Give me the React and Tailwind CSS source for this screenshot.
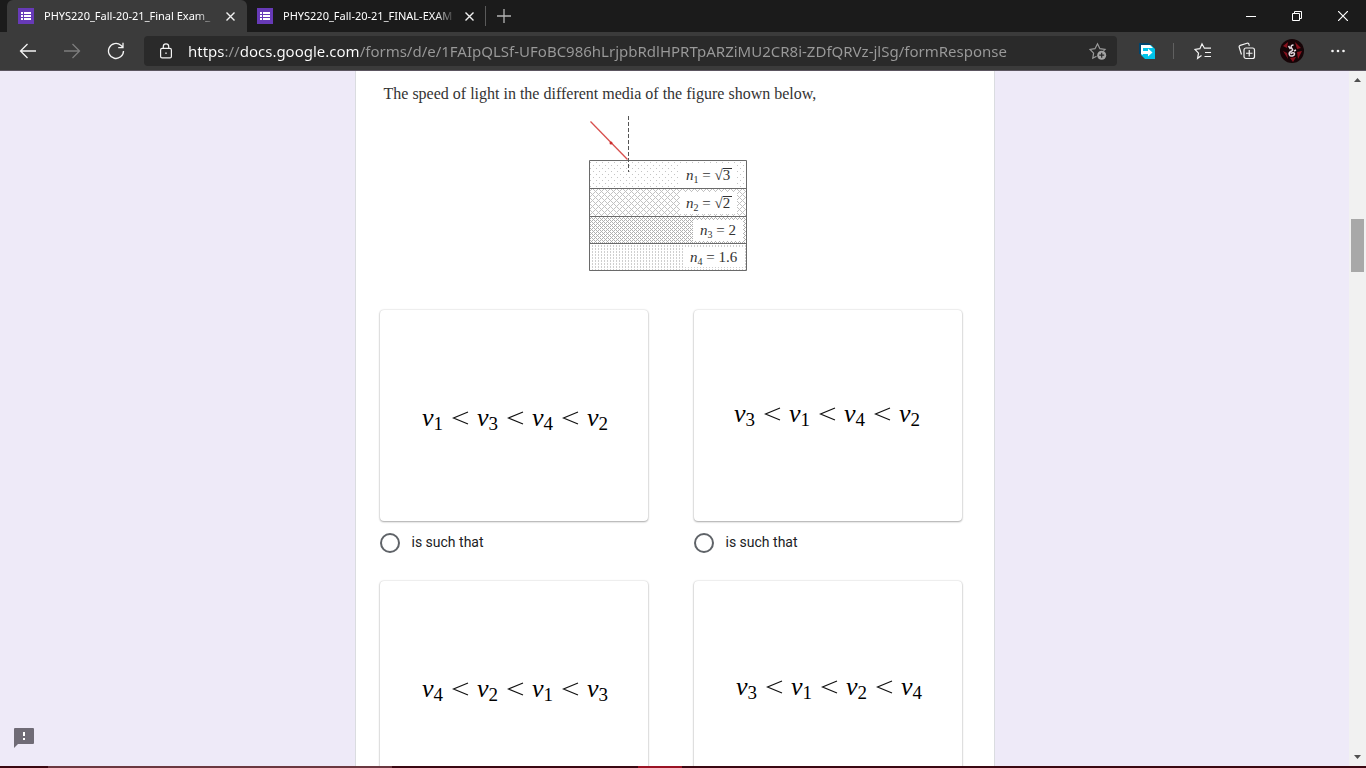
const tabs = [
  { title: "PHYS220_Fall-20-21_Final Exam_", active: true },
  { title: "PHYS220_Fall-20-21_FINAL-EXAM", active: false },
];

const url =
  "https://docs.google.com/forms/d/e/1FAIpQLSf-UFoBC986hLrjpbRdlHPRTpARZiMU2CR8i-ZDfQRVz-jlSg/formResponse";

const choices = [
  { id: "a", order: [1, 3, 4, 2], pad: "pl-1 pt-1" },
  { id: "b", order: [3, 1, 4, 2], pad: "pb-1" },
  { id: "c", order: [4, 2, 1, 3], pad: "pl-1 pt-1" },
  { id: "d", order: [3, 1, 2, 4], pad: "pl-1" },
];

function FormIcon() {
  return (
    <svg className="h-4 w-4 shrink-0" viewBox="0 0 16 16" shapeRendering="crispEdges">
      <rect width="16" height="16" fill="#673ab7" />
      <g fill="#fff">
        <rect x="3" y="4" width="2" height="2" />
        <rect x="6" y="4" width="7" height="2" />
        <rect x="3" y="7" width="2" height="2" />
        <rect x="6" y="7" width="7" height="2" />
        <rect x="3" y="10" width="2" height="2" />
        <rect x="6" y="10" width="7" height="2" />
      </g>
    </svg>
  );
}

function Tab({ title, active }) {
  return (
    <div
      className={
        active
          ? "flex h-8 w-[240px] items-center rounded-t-md bg-[#3b3b3b] px-[11px]"
          : "flex h-8 w-[238px] items-center px-2.5"
      }
    >
      <FormIcon />
      <span className="ml-2.5 min-w-0 flex-1 overflow-hidden whitespace-nowrap font-['Noto_Sans',sans-serif] text-[11px] leading-4 text-white [mask-image:linear-gradient(to_right,#000_88%,transparent)]">
        {title}
      </span>
      <button aria-label="Close tab" className="ml-2 shrink-0">
        <svg className="h-[11px] w-[11px]" viewBox="0 0 11 11" stroke="#f0f0f0" strokeWidth="1.4">
          <path d="M1.5 1.5l8 8M9.5 1.5l-8 8" />
        </svg>
      </button>
    </div>
  );
}

function TitleBar() {
  return (
    <div className="flex h-8 shrink-0 items-center bg-[#1b1b1b] pl-[7px]">
      {tabs.map((tab) => (
        <Tab key={tab.title} {...tab} />
      ))}
      <div className="h-5 w-px bg-[#5a5a5a]" />
      <button aria-label="New tab" className="ml-2.5">
        <svg className="h-4 w-4" viewBox="0 0 16 16" stroke="#b4b4b4" strokeWidth="1.3">
          <path d="M8 1v14M1 8h14" />
        </svg>
      </button>
      <div className="ml-auto flex">
        <button aria-label="Minimize" className="flex h-7 w-[46px] items-center justify-center">
          <svg className="h-2.5 w-2.5" viewBox="0 0 10 10" stroke="#fff">
            <path d="M0 5.5h10" />
          </svg>
        </button>
        <button aria-label="Restore" className="flex h-7 w-[46px] items-center justify-center">
          <svg className="h-2.5 w-2.5" viewBox="0 0 10 10" fill="none" stroke="#fff">
            <path d="M.5 2.5h7v7h-7zM2.5 2.5v-2h7v7h-2" />
          </svg>
        </button>
        <button aria-label="Close" className="flex h-7 w-[46px] items-center justify-center">
          <svg className="h-2.5 w-2.5" viewBox="0 0 10 10" stroke="#fff" strokeWidth="1.2">
            <path d="M0 0l10 10M10 0L0 10" />
          </svg>
        </button>
      </div>
    </div>
  );
}

function Toolbar() {
  return (
    <div className="flex h-[39px] shrink-0 items-center border-b border-[#5b5560] bg-[#3b3b3b] pl-1.5 pr-[5px]">
      <button aria-label="Back" className="flex w-11 justify-center">
        <svg className="h-[18px] w-[18px]" viewBox="0 0 18 18" fill="none" stroke="#f4f4f4" strokeWidth="1.3">
          <path d="M17 9H1.5M8.5 2l-7 7 7 7" />
        </svg>
      </button>
      <button aria-label="Forward" className="flex w-11 justify-center">
        <svg className="h-[18px] w-[18px]" viewBox="0 0 18 18" fill="none" stroke="#7d7d7d" strokeWidth="1.3">
          <path d="M1 9h15.5M9.5 2l7 7-7 7" />
        </svg>
      </button>
      <button aria-label="Refresh" className="flex w-11 justify-center">
        <svg className="h-[18px] w-[18px]" viewBox="0 0 18 18" fill="none" stroke="#f4f4f4" strokeWidth="1.3">
          <path d="M16.5 9A7.5 7.5 0 1 1 13.8 3.2L16 5.2M16 .8v4.8h-4.8" />
        </svg>
      </button>

      <div className="ml-1.5 flex h-[30px] min-w-0 flex-1 items-center rounded bg-[#2a2a2a] pl-4 pr-2.5">
        <svg className="h-4 w-3 shrink-0" viewBox="0 0 12 16" fill="none" stroke="#f4f4f4" strokeWidth="1.2">
          <rect x=".6" y="5.4" width="10.8" height="9.5" rx="1.5" />
          <path d="M3.3 5.4V3.5a2.7 2.7 0 0 1 5.4 0v1.9" />
          <rect x="5.3" y="9.5" width="1.4" height="1.4" fill="#f4f4f4" stroke="none" />
        </svg>
        <input
          aria-label="Address"
          readOnly
          value={url}
          className="ml-4 min-w-0 flex-1 bg-[linear-gradient(to_right,#ffffff_37px,#9a9a9a_37px,#9a9a9a_52px,#ffffff_52px,#ffffff_171px,#9a9a9a_171px)] bg-clip-text font-['Noto_Sans',sans-serif] text-[15px] leading-6 text-transparent outline-none"
        />
        <button aria-label="Add to favorites" className="shrink-0">
          <svg className="h-[18px] w-[18px]" viewBox="0 0 18 18" fill="none" stroke="#9b9b9b" strokeWidth="1.2">
            <path d="M7.5 14.2L3.8 16.2l.8-5.1L1 7.4l5-.7L8.5 1.8l2.4 4.9 5.1.7-1.5 1.4" />
            <circle cx="12.7" cy="13.2" r="4.5" fill="#a4a4a4" stroke="none" />
            <path d="M12.7 10.7v5M10.2 13.2h5" stroke="#2a2a2a" />
          </svg>
        </button>
      </div>

      <button aria-label="Extension" className="ml-[7px] flex w-[46px] justify-center">
        <svg className="h-4 w-4" viewBox="0 0 16 16">
          <path d="M0 0h10l2 2v9H0z" fill="#00456e" />
          <path d="M2 2h10l4 4v10H6l-4-4z" fill="#00c4ea" />
          <path d="M2 2h9l3 3H4v7l-2-1z" fill="#fff" />
          <path d="M4 8h5V5.5L13.5 9.500 9 13.500V11H4z" fill="#fff" />
        </svg>
      </button>
      <div className="ml-[3px] mr-[7px] h-4 w-px bg-[#606060]" />
      <button aria-label="Favorites" className="flex w-11 justify-center">
        <svg className="h-[18px] w-[18px]" viewBox="0 0 18 18" fill="none" stroke="#f4f4f4" strokeWidth="1.2">
          <path d="M7.5 13.5L3.6 16.3l.9-5.2L1 7.400l4.900-.7L8 1.800l2.400 4.400H17M11 10.500h6M10.500 14.500H17" />
        </svg>
      </button>
      <button aria-label="Collections" className="flex w-11 justify-center">
        <svg className="h-[18px] w-[18px]" viewBox="0 0 18 18" fill="none" stroke="#f4f4f4" strokeWidth="1.2">
          <path d="M3.5 12.5L1.200 5.200a1.500 1.500 0 0 1 1-1.900L9 1.200a1.500 1.500 0 0 1 1.900 1l.5 1.500" />
          <rect x="6" y="6" width="10.5" height="10.5" rx="2" />
          <path d="M11.25 8v6.5M8 11.25h6.5" />
        </svg>
      </button>
      <button aria-label="Profile" className="flex w-[46px] justify-center">
        <svg className="h-6 w-6" viewBox="0 0 24 24">
          <circle cx="12" cy="12" r="12" fill="#160407" />
          <path d="M3 7l5-4-1 6zM15 3l6 6-4 1zM3 12l4 2 1 6zM17 13l5-1-4 8zM10 19l6-1-3 5z" fill="#8a101d" />
          <path
            d="M13.5 6c-2 0-3 1.500-2 3s2 2 0 3-3 2-2 4 5 1 5-1-3-1.500-3.500 0M8.500 7l2 3M14 12l2-1"
            fill="none"
            stroke="#e4d8df"
            strokeWidth="1.5"
          />
        </svg>
      </button>
      <button aria-label="Settings and more" className="flex w-[46px] justify-center">
        <svg className="h-3.5 w-3.5" viewBox="0 0 14 14" fill="#f4f4f4">
          <circle cx="1.5" cy="7" r="1.3" />
          <circle cx="7" cy="7" r="1.3" />
          <circle cx="12.5" cy="7" r="1.3" />
        </svg>
      </button>
    </div>
  );
}

function MediaFigure() {
  return (
    <svg
      className="mx-auto h-[170px] w-[180px]"
      viewBox="0 0 180 170"
      fontFamily="'Liberation Serif', serif"
      fontSize="15"
      fill="#333"
    >
      <defs>
        <pattern id="sparse" width="6" height="6" patternUnits="userSpaceOnUse">
          <path d="M1 1h1v1H1zM4 4h1v1H4z" fill="#c4c4c4" />
        </pattern>
        <pattern id="cross" width="6" height="6" patternUnits="userSpaceOnUse">
          <path d="M0 0h1v1H0zM1 1h1v1H1zM2 2h1v1H2zM3 3h1v1H3zM4 4h1v1H4zM5 5h1v1H5zM5 1h1v1H5zM4 2h1v1H4zM2 4h1v1H2zM1 5h1v1H1z" fill="#c2c2c2" />
        </pattern>
        <pattern id="dense" width="4" height="4" patternUnits="userSpaceOnUse">
          <path d="M0 0h1v1H0zM2 0h1v1H2zM1 1h1v1H1zM0 2h1v1H0zM2 2h1v1H2zM3 3h1v1H3z" fill="#b0b0b0" />
        </pattern>
        <pattern id="columns" width="3" height="3" patternUnits="userSpaceOnUse">
          <path d="M0 0h1v2H0z" fill="#cfcfcf" />
        </pattern>
      </defs>
      <rect x="9" y="50" width="158" height="28" fill="url(#sparse)" />
      <rect x="9" y="78" width="158" height="28" fill="url(#cross)" />
      <rect x="9" y="106" width="158" height="28" fill="url(#dense)" />
      <rect x="9" y="134" width="158" height="27" fill="url(#columns)" />
      <g fill="#fff">
        <rect x="100" y="54" width="57" height="23" />
        <rect x="100" y="82" width="57" height="22" />
        <rect x="113" y="110" width="50" height="21" />
        <rect x="104" y="137" width="59" height="20" />
      </g>
      <path
        d="M9.5 50.5h157v110h-157zM9.5 78.5h157M9.5 106.5h157M9.5 133.5h157"
        fill="none"
        stroke="#6a6a6a"
      />
      <path d="M48.5 6v56" stroke="#555" strokeDasharray="4 2" />
      <path d="M10.5 11.5l37 38" stroke="#d8504e" strokeWidth="1.3" />
      <circle cx="31" cy="33" r="1.5" fill="#cc2f2f" />

      <text x="106" y="70">
        <tspan fontStyle="italic">n</tspan>
        <tspan dy="3" fontSize="10">1</tspan>
        <tspan dy="-3"> = √3</tspan>
      </text>
      <text x="106" y="98">
        <tspan fontStyle="italic">n</tspan>
        <tspan dy="3" fontSize="10">2</tspan>
        <tspan dy="-3"> = √2</tspan>
      </text>
      <path d="M143 58.5h9M143 86.5h9" stroke="#333" />
      <text x="120" y="125">
        <tspan fontStyle="italic">n</tspan>
        <tspan dy="3" fontSize="10">3</tspan>
        <tspan dy="-3"> = 2</tspan>
      </text>
      <text x="110" y="152">
        <tspan fontStyle="italic">n</tspan>
        <tspan dy="3" fontSize="10">4</tspan>
        <tspan dy="-3"> = 1.6</tspan>
      </text>
    </svg>
  );
}

function Inequality({ order }) {
  return (
    <div className="flex items-center gap-2 font-['Liberation_Serif',serif] text-[26px] leading-8 text-black">
      {order.map((n, i) => (
        <span key={n} className="flex items-center gap-2">
          {i > 0 && (
            <svg className="h-3.5 w-[17px]" viewBox="0 0 17 14" fill="none" stroke="#111" strokeWidth="1.2" role="img" aria-label="less than">
              <path d="M16 1L1.5 7 16 13" />
            </svg>
          )}
          <span className="w-[22px] whitespace-nowrap">
            <i>v</i>
            <sub className="text-[19px]">{n}</sub>
          </span>
        </span>
      ))}
    </div>
  );
}

function Choice({ id, order, pad }) {
  return (
    <div>
      <div
        className={`flex h-[211px] items-center justify-center rounded bg-white shadow-[0_1px_2px_rgba(0,0,0,0.3),0_0_2px_rgba(0,0,0,0.2)] ${pad}`}
      >
        <Inequality order={order} />
      </div>
      <div className="mt-3 flex h-5 items-center gap-3">
        <input
          type="radio"
          name="order"
          id={id}
          className="h-5 w-5 appearance-none rounded-full border-2 border-[#5f6368] bg-white"
        />
        <label htmlFor={id} className="pb-0.5 font-[Roboto,sans-serif] text-[14px] leading-5 text-[#202124]">
          is such that
        </label>
      </div>
    </div>
  );
}

function Scrollbar() {
  return (
    <div className="flex w-[17px] shrink-0 flex-col items-center bg-[#f1f1f1]">
      <svg className="h-[17px] w-[17px]" viewBox="0 0 17 17" fill="#505050">
        <path d="M5 11h7L8.500 7z" />
      </svg>
      <div className="mt-[131px] h-[53px] w-[13px] bg-[#a8a8a8]" />
      <svg className="mt-auto h-[17px] w-[17px]" viewBox="0 0 17 17" fill="#505050">
        <path d="M5 6h7L8.500 10z" />
      </svg>
    </div>
  );
}

export default function App() {
  return (
    <div className="flex h-screen flex-col overflow-hidden font-['Noto_Sans',sans-serif]">
      <TitleBar />
      <Toolbar />
      <div className="relative flex min-h-0 flex-1 bg-[#eeeaf8]">
        <main className="min-w-0 flex-1 overflow-hidden">
          <form className="mx-auto w-full max-w-[640px] border-x border-[#dadce0] bg-white pb-7 pl-6 pr-8">
            <p className="pl-1 pt-[13px] font-['Liberation_Serif',serif] text-[16px] leading-5 text-[#333]">
              The speed of light in the different media of the figure shown below,
            </p>
            <div className="mt-1.5 pr-0.5">
              <MediaFigure />
            </div>
            <div className="mt-[30px] grid grid-cols-2 gap-x-[46px] gap-y-7">
              {choices.map((choice) => (
                <Choice key={choice.id} {...choice} />
              ))}
            </div>
          </form>
        </main>
        <Scrollbar />
        <button aria-label="Report a problem" className="absolute bottom-[18px] left-3.5">
          <svg className="h-5 w-5" viewBox="0 0 20 20">
            <path d="M1 0h18a1 1 0 0 1 1 1v14a1 1 0 0 1-1 1H4l-4 4V1a1 1 0 0 1 1-1z" fill="#6f6b76" />
            <path d="M9 4h2v4H9zM9 10h2v2H9z" fill="#fff" />
          </svg>
        </button>
      </div>
      <div className="flex h-0.5 shrink-0 bg-[#3b0812]">
        <div className="ml-12 h-full w-[344px] bg-[#6b3840]" />
        <div className="ml-[246px] h-full w-11 bg-[#9a1324]" />
      </div>
    </div>
  );
}
